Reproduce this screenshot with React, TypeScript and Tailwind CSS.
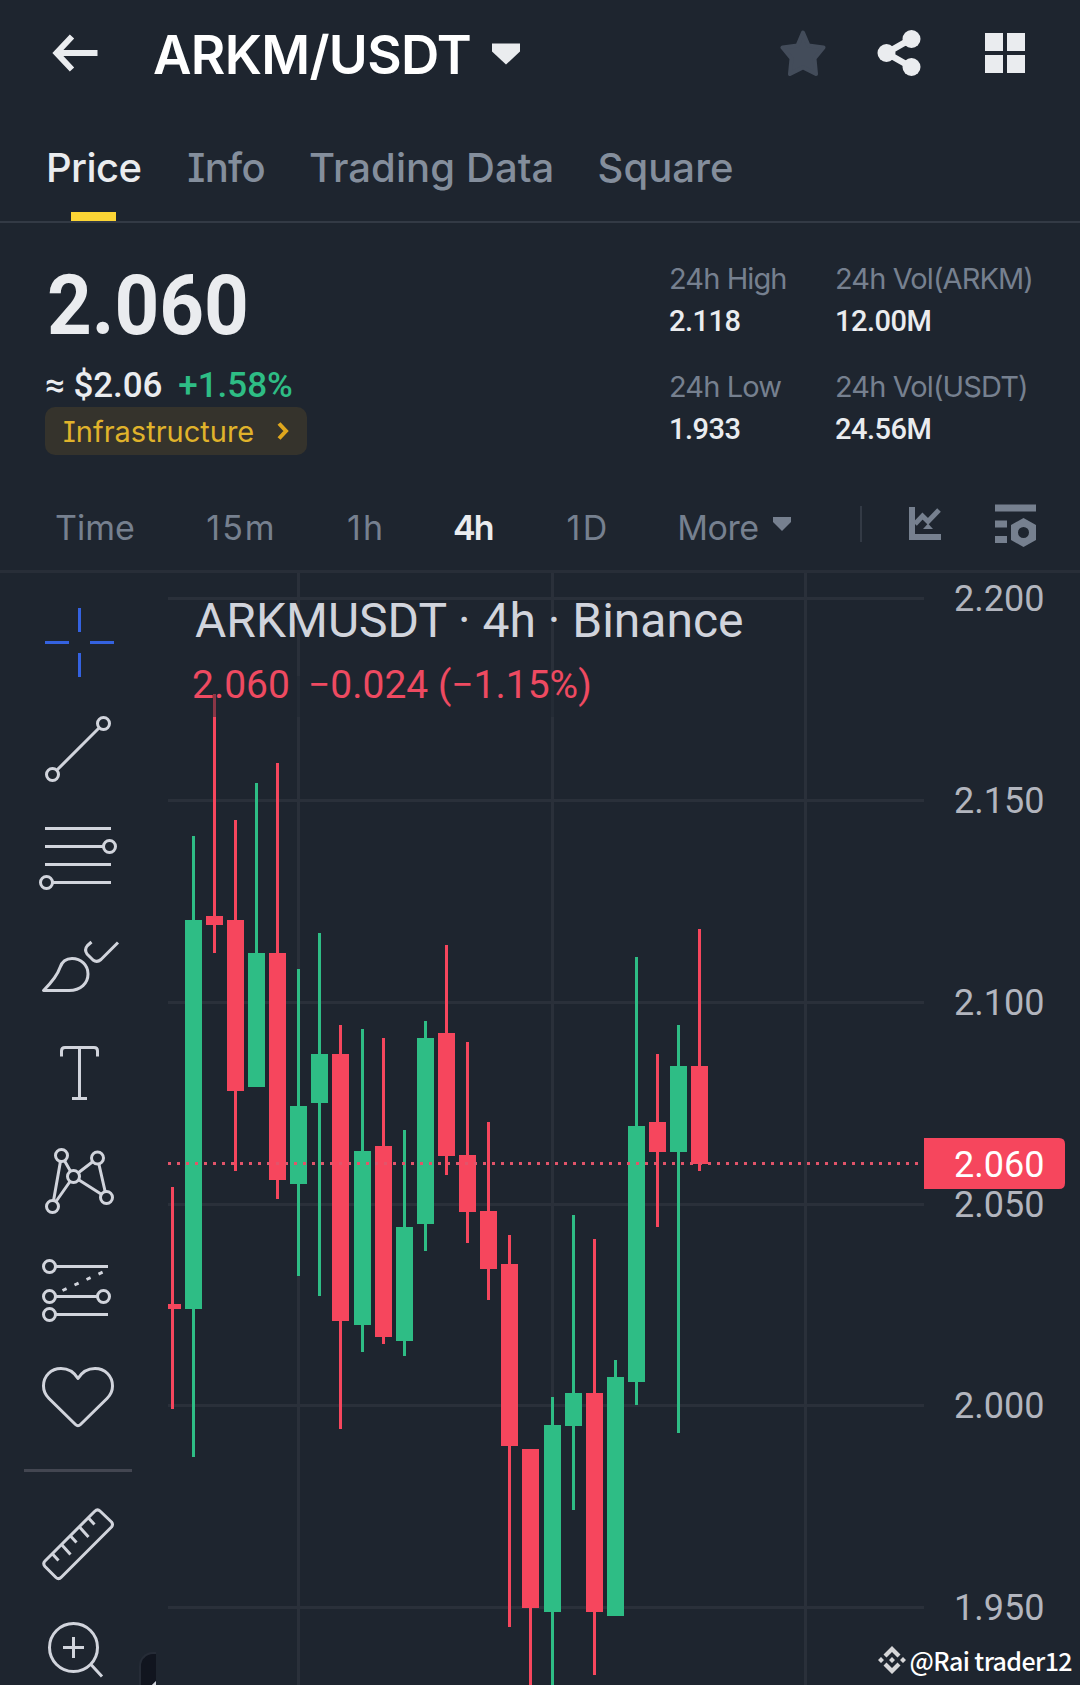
import React from 'react';

type Candle = {
  x: number;
  high: number;
  top: number;
  bottom: number;
  low: number;
  up?: boolean;
};

const CHART_LEFT = 168;
const CHART_TOP = 573;

const candles: Candle[] = [
  { x: 164, high: 1187, top: 1304, bottom: 1309, low: 1409 },
  { x: 185, high: 836, top: 920, bottom: 1309, low: 1457, up: true },
  { x: 206, high: 694, top: 916, bottom: 925, low: 953 },
  { x: 227, high: 820, top: 920, bottom: 1091, low: 1171 },
  { x: 248, high: 783, top: 953, bottom: 1087, low: 1087, up: true },
  { x: 269, high: 763, top: 953, bottom: 1180, low: 1199 },
  { x: 290, high: 969, top: 1106, bottom: 1184, low: 1276, up: true },
  { x: 311, high: 933, top: 1054, bottom: 1103, low: 1296, up: true },
  { x: 332, high: 1025, top: 1054, bottom: 1321, low: 1429 },
  { x: 354, high: 1029, top: 1151, bottom: 1325, low: 1352, up: true },
  { x: 375, high: 1038, top: 1146, bottom: 1337, low: 1344 },
  { x: 396, high: 1130, top: 1227, bottom: 1341, low: 1356, up: true },
  { x: 417, high: 1021, top: 1038, bottom: 1224, low: 1251, up: true },
  { x: 438, high: 945, top: 1033, bottom: 1156, low: 1175 },
  { x: 459, high: 1042, top: 1155, bottom: 1212, low: 1243 },
  { x: 480, high: 1122, top: 1211, bottom: 1269, low: 1300 },
  { x: 501, high: 1235, top: 1264, bottom: 1446, low: 1627 },
  { x: 522, high: 1449, top: 1449, bottom: 1608, low: 1690 },
  { x: 544, high: 1397, top: 1425, bottom: 1612, low: 1690, up: true },
  { x: 565, high: 1215, top: 1393, bottom: 1426, low: 1510, up: true },
  { x: 586, high: 1239, top: 1393, bottom: 1612, low: 1675 },
  { x: 607, high: 1360, top: 1377, bottom: 1616, low: 1616, up: true },
  { x: 628, high: 957, top: 1126, bottom: 1382, low: 1405, up: true },
  { x: 649, high: 1054, top: 1122, bottom: 1152, low: 1227 },
  { x: 670, high: 1025, top: 1066, bottom: 1152, low: 1433, up: true },
  { x: 691, high: 929, top: 1066, bottom: 1164, low: 1171 },
];

const priceLevels = [
  { y: 598, label: '2.200' },
  { y: 800, label: '2.150' },
  { y: 1002, label: '2.100' },
  { y: 1204, label: '2.050' },
  { y: 1405, label: '2.000' },
  { y: 1607, label: '1.950' },
];

const timeLines = [298.5, 552.5, 805.5];

function Header() {
  return (
    <header className="flex h-[106px] items-center pl-[52px] pr-[55px]">
      <svg width="46" height="38" viewBox="0 0 46 38" fill="none" stroke="#eaecef" strokeWidth="6">
        <path d="M45.500 19H5M20 2.500L4.500 19L20 35.500" />
      </svg>
      <h1 className="ml-[55px] pt-[4px] text-[53px] font-semibold leading-none tracking-[-0.7px] text-white">ARKM/USDT</h1>
      <svg className="ml-[21px] mt-[2px]" width="28" height="22" viewBox="0 0 28 22" fill="#eaecef">
        <path d="M0 0.500H28V8.500L14 21.500L0 8.500Z" />
      </svg>
      <div className="ml-auto flex items-center">
        <svg width="46" height="48" viewBox="0 0 46 48" fill="#434c5a" stroke="#434c5a" strokeWidth="4" strokeLinejoin="round">
          <path d="M23 3.500L28.500 16.500L43.500 18.500L34.500 29.500L36 45L23 38.500L10 45L11.500 29.500L2.500 18.500L17.500 16.500Z" />
        </svg>
        <svg className="ml-[51px]" width="44" height="48" viewBox="0 0 44 48" fill="#eaecef">
          <path d="M34 10L9.500 24L34 38" fill="none" stroke="#eaecef" strokeWidth="6.500" />
          <circle cx="34.500" cy="10" r="9" />
          <circle cx="9.500" cy="24" r="9" />
          <circle cx="34.500" cy="38" r="9" />
        </svg>
        <div className="ml-[64px] grid grid-cols-2 gap-[4px]">
          <span className="size-[18px] bg-[#eaecef]" />
          <span className="size-[18px] bg-[#eaecef]" />
          <span className="size-[18px] bg-[#eaecef]" />
          <span className="size-[18px] bg-[#eaecef]" />
        </div>
      </div>
    </header>
  );
}

function Tabs() {
  return (
    <nav className="flex h-[117px] items-stretch gap-[46px] border-b-2 border-[#333a45] pl-[46px] text-[40px] font-medium leading-none text-[#848e9c] [font-feature-settings:'cv08']">
      <div className="relative pt-[42px] tracking-[-0.6px] text-[#eaecef]">
        Price
        <span className="absolute bottom-0 left-[25px] h-[9px] w-[45px] bg-[#fcd535]" />
      </div>
      <div className="pt-[42px] tracking-[-0.7px]">Info</div>
      <div className="-ml-[2px] pt-[42px] tracking-[0.1px]">Trading Data</div>
      <div className="-ml-[3px] pt-[42px] tracking-[0.1px]">Square</div>
    </nav>
  );
}

function Stat({ label, value }: { label: string; value: string }) {
  return (
    <div className="h-[108px] whitespace-nowrap leading-none">
      <div className="text-[29px] tracking-[-0.9px] text-[#76808f]">{label}</div>
      <div className="mt-[14px] font-[Roboto] text-[29px] font-medium tracking-[-0.5px] text-[#eaecef]">{value}</div>
    </div>
  );
}

function PriceSummary() {
  return (
    <section className="flex h-[249px]">
      <div className="w-[669px] pl-[45px]">
        <div className="ml-[2px] mt-[41px] w-max origin-left scale-x-[0.93] font-[Roboto] text-[84px] font-bold leading-none text-[#eaecef]">
          2.060
        </div>
        <div className="mt-[21px] flex h-[32px] items-center font-[Roboto] text-[35px] font-medium leading-none">
          <span className="tracking-[-0.1px] text-[#eaecef]">≈ $2.06</span>
          <span className="ml-[16px] text-[#2ebd85]">+1.58%</span>
        </div>
        <div className="mt-[6px] flex h-[48px] w-[262px] items-center rounded-[10px] bg-[#35332c] pl-[18px] text-[29px] text-[#e0b32b] [font-feature-settings:'cv08']">
          <span className="leading-none">Infrastructure</span>
          <svg className="ml-auto mr-[18px]" width="12" height="20" viewBox="0 0 12 20" fill="none" stroke="#dfa71d" strokeWidth="4">
            <path d="M2 2.500L9 10L2 17.500" />
          </svg>
        </div>
      </div>
      <div className="grid grid-cols-[166px_1fr] content-start pt-[41px]">
        <Stat label="24h High" value="2.118" />
        <Stat label="24h Vol(ARKM)" value="12.00M" />
        <Stat label="24h Low" value="1.933" />
        <Stat label="24h Vol(USDT)" value="24.56M" />
      </div>
    </section>
  );
}

function Timeframes() {
  return (
    <div className="flex h-[101px] items-center border-b-[3px] border-[#282e38] pl-[55px] pr-[44px] pt-[12px] text-[34px] leading-none text-[#76808f]">
      <div className="flex flex-1 items-center gap-[70.5px] pt-[2px]">
        <span>Time</span>
        <span className="ml-[1px] tracking-[2px]">15m</span>
        <span className="tracking-[2px]">1h</span>
        <span className="-ml-[2.5px] font-semibold tracking-[-2px] text-[#eaecef]">4h</span>
        <span className="ml-[3.5px] tracking-[2.5px]">1D</span>
        <span className="-ml-[3px] flex items-center tracking-[-0.5px]">
          More
          <svg className="mb-[8px] ml-[14px]" width="18" height="14" viewBox="0 0 18 14" fill="#76808f">
            <path d="M0 0H18V5L9 14L0 5Z" />
          </svg>
        </span>
      </div>
      <span className="mb-[6px] mr-[47px] h-[36px] w-[2px] bg-[#333a45]" />
      <svg className="mb-[7px]" width="32" height="33" viewBox="0 0 32 33" fill="none" stroke="#76808f" strokeWidth="5">
        <path d="M3 0V30H32" strokeWidth="6" />
        <path d="M6 17L13.500 9L19 14.500L30 3" />
        <path d="M14 22L19 16.500L24 22Z" fill="#76808f" stroke="none" />
      </svg>
      <svg className="mb-[4px] ml-[54px]" width="41" height="43" viewBox="0 0 41 43" fill="#76808f">
        <path d="M0 0.500H41V7.500H0ZM0 16.500H12V23.500H0ZM0 32H12V39H0Z" />
        <path fillRule="evenodd" d="M28.500 14L41 21V36L28.500 43L16 36V21ZM28.500 23A5.500 5.500 0 1 0 28.500 34A5.500 5.500 0 1 0 28.500 23Z" />
      </svg>
    </div>
  );
}

function Tool({ children }: { children: React.ReactNode }) {
  return (
    <svg
      className="block shrink-0"
      width="168"
      height="108"
      viewBox="0 0 168 108"
      fill="none"
      stroke="#d1d4dc"
      strokeWidth="3"
      strokeLinejoin="round"
    >
      {children}
    </svg>
  );
}

function Dot({ x, y }: { x: number; y: number }) {
  return <circle cx={x} cy={y} r="6" fill="#1e252f" />;
}

function Toolbar() {
  return (
    <aside className="relative flex h-full w-[168px] shrink-0 flex-col overflow-hidden pt-[15px]">
      {/* crosshair */}
      <Tool>
        <path stroke="#3462e0" d="M79.500 20V44M79.500 65V89M45 54.500H69M90 54.500H114" />
      </Tool>
      {/* trend line */}
      <Tool>
        <path d="M52.500 78.500L103.500 27.500" />
        <Dot x={52.5} y={78.5} />
        <Dot x={103.5} y={27.5} />
      </Tool>
      {/* fib retracement */}
      <Tool>
        <path d="M45 24.500H111M45 42.500H109M45 60.500H111M47 78.500H111" />
        <Dot x={109.5} y={42.5} />
        <Dot x={46.5} y={78.5} />
      </Tool>
      {/* brush */}
      <Tool>
        <path d="M43.500 78.500H69C81 78.500 88 71 88 62C88 53 81 46.500 72 46.500C66 46.500 62 49.500 60 55.500C57.500 63 51 71 43.500 78.500Z" />
        <path d="M91.500 30L87.500 33.500Q84 37.500 87 42L93 48Q97 51 101 47.500L118 30.500" />
      </Tool>
      {/* text */}
      <Tool>
        <path d="M61.500 36.500V31Q61.500 27.500 65 27.500H94Q97.500 27.500 97.500 31V36.500M79.500 27.500V78.500M72 78.500H87" />
      </Tool>
      {/* patterns */}
      <Tool>
        <path d="M52.500 78.500L61.500 27.500L73.500 48.500L97.500 30L106.500 69.500L73.500 48.500Z" />
        <Dot x={61.5} y={27.5} />
        <Dot x={97.5} y={30} />
        <Dot x={73.5} y={48.5} />
        <Dot x={52.5} y={78.5} />
        <Dot x={106.5} y={69.5} />
      </Tool>
      {/* forecast */}
      <Tool>
        <path d="M49.500 30.500H108M49.500 60.500H103M49.500 78.500H108" />
        <path d="M62.500 54.500L104 35.500" strokeDasharray="4.500 8.700" />
        <Dot x={49.5} y={30.5} />
        <Dot x={49.5} y={60.5} />
        <Dot x={103.5} y={60.5} />
        <Dot x={49.5} y={78.5} />
      </Tool>
      {/* favourites */}
      <Tool>
        <path d="M78 34.500C74 28 68 24.500 61 24.500C51 24.500 43.500 32 43.500 42C43.500 47.500 45.500 51 49 54.500L75.500 80.500Q78 83 80.500 80.500L107 54.500C110.500 51 112.500 47.500 112.500 42C112.500 32 105 24.500 95 24.500C88 24.500 82 28 78 34.500Z" />
      </Tool>
      <div className="mb-[19px] ml-[24px] mt-[17px] h-[3px] w-[108px] shrink-0 bg-[#434651]" />
      {/* ruler */}
      <Tool>
        <path d="M94.500 20.500Q97.500 17.500 100 20L111.500 31Q113.500 33.500 111.500 36L61.500 86Q58.700 89 56 86.500L45 75.500Q42.500 72.500 45 70Z" />
        <path d="M52.500 63L58.500 69.500M61.500 53.500L70.500 63.500M70.500 45L76.500 51.500M79.500 36L88.500 46M88.500 27L94.500 33.500" />
      </Tool>
      {/* zoom in */}
      <Tool>
        <circle cx="73.500" cy="48.500" r="24" />
        <path d="M63 48.500H84M73.500 38V59M90.500 65L102 77.500" />
      </Tool>
      {/* collapse handle peeking out at the bottom edge */}
      <div className="absolute bottom-0 left-[139px] h-[33px] w-[17px] overflow-hidden rounded-tl-[14px] border-l-2 border-t-2 border-[#262c37] bg-[#11151f]">
        <span className="absolute bottom-[-3px] right-0 h-[7px] w-[3px] rotate-45 bg-[#d1d4dc]" />
      </div>
    </aside>
  );
}

function Chart() {
  return (
    <div className="relative h-full flex-1">
      <svg
        className="block"
        width="912"
        height="1112"
        viewBox={`${CHART_LEFT} ${CHART_TOP} 912 1112`}
        shapeRendering="crispEdges"
      >
        {priceLevels.map((l) => (
          <rect key={l.label} x={CHART_LEFT} y={l.y - 1} width="756" height="3" fill="#2a303a" />
        ))}
        {timeLines.map((x) => (
          <rect key={x} x={x - 1.5} y={CHART_TOP} width="3" height="1112" fill="#2a303a" />
        ))}
        {candles.map((c) => (
          <g key={c.x} fill={c.up ? '#2ebd85' : '#f6465d'}>
            <rect x={c.x + 7} y={c.high} width="3" height={c.low - c.high} />
            <rect x={c.x} y={c.top} width="17" height={c.bottom - c.top} />
          </g>
        ))}
        {/* legend backdrop dims the tallest wick */}
        <rect x="186" y="676" width="410" height="41" fill="#1e252f" fillOpacity="0.5" />
        <path d="M168 1163.500H924" stroke="#e2546a" strokeWidth="3" strokeDasharray="3 6" />
        <path d="M924 1138H1059Q1065 1138 1065 1144V1183Q1065 1189 1059 1189H924Z" fill="#f6465d" shapeRendering="auto" />
        <g fontFamily="Roboto, sans-serif" fontSize="36" fill="#b2b5be">
          {priceLevels.map((l) => (
            <text key={l.label} x="954" y={l.y + 13}>{l.label}</text>
          ))}
          <text x="954" y="1177" fill="#ffffff">2.060</text>
        </g>
      </svg>
      <div className="absolute left-[24px] top-[24px] whitespace-nowrap font-[Roboto] leading-none">
        <div className="ml-[3px] text-[48px] text-[#d1d4dc]">ARKMUSDT · 4h · Binance</div>
        <div className="mt-[21px] text-[39px] text-[#ee4a61]">
          2.060<span className="ml-[18px]">−0.024 (−1.15%)</span>
        </div>
      </div>
      <div className="absolute bottom-[9px] right-[8px] flex h-[32px] items-center">
        <svg width="28" height="28" viewBox="0 0 28 28" fill="#d6d6d8">
          <path d="M14 0L22.500 8.500L19.500 11.500L14 6L8.500 11.500L5.500 8.500ZM14 28L5.500 19.500L8.500 16.500L14 22L19.500 16.500L22.500 19.500Z" />
          <path d="M14 11L17 14L14 17L11 14ZM3 11L6 14L3 17L0 14ZM25 11L28 14L25 17L22 14Z" />
        </svg>
        <span className="ml-[4px] whitespace-nowrap font-['Noto_Sans_CJK_SC',sans-serif] text-[25px] font-medium leading-none tracking-[-0.6px] text-white">
          @Rai trader12
        </span>
      </div>
    </div>
  );
}

export default function App() {
  return (
    <main className="h-[1685px] w-[1080px] overflow-hidden bg-[#1e252f] font-[Inter,sans-serif]">
      <Header />
      <Tabs />
      <PriceSummary />
      <Timeframes />
      <div className="flex h-[1112px]">
        <Toolbar />
        <Chart />
      </div>
    </main>
  );
}
